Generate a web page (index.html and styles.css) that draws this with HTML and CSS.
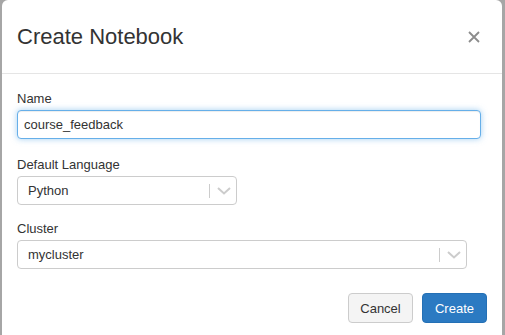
FILE: index.html
```html
<!DOCTYPE html>
<html>
<head>
<meta charset="utf-8">
<link rel="stylesheet" href="styles.css">
</head>
<body>
<div class="modal">
  <div class="modal-header">
    <h4 class="modal-title">Create Notebook</h4>
    <button class="close" aria-label="Close">
      <svg width="12" height="12" viewBox="0 0 12 12"><path d="M1 1L11 11M11 1L1 11" stroke="#8c8c8c" stroke-width="1.8" stroke-linecap="butt"/></svg>
    </button>
  </div>
  <div class="modal-body">
    <div class="field">
      <label class="label">Name</label>
      <input class="text-input" type="text" value="course_feedback">
    </div>
    <div class="field field-tight">
      <label class="label">Default Language</label>
      <div class="select select-lang">
        <span class="select-value">Python</span>
        <span class="select-indicators">
          <span class="select-sep"></span>
          <svg class="chevron" width="14" height="8" viewBox="0 0 14 8"><path d="M1 1L7 6.5L13 1" fill="none" stroke="#cccccc" stroke-width="2"/></svg>
        </span>
      </div>
    </div>
    <div class="field">
      <label class="label">Cluster</label>
      <div class="select select-cluster">
        <span class="select-value">mycluster</span>
        <span class="select-indicators">
          <span class="select-sep"></span>
          <svg class="chevron" width="14" height="8" viewBox="0 0 14 8"><path d="M1 1L7 6.5L13 1" fill="none" stroke="#cccccc" stroke-width="2"/></svg>
        </span>
      </div>
    </div>
  </div>
  <div class="modal-footer">
    <button class="btn btn-default">Cancel</button>
    <button class="btn btn-primary">Create</button>
  </div>
</div>
</body>
</html>
```

FILE: styles.css
```css
html, body {
  margin: 0;
  padding: 0;
}
body {
  background: #a6a6a6;
  font-family: "Liberation Sans", Arial, sans-serif;
  color: #333;
  height: 335px;
  overflow: hidden;
}
.modal {
  margin-left: 2px;
  width: 500px;
  min-height: 345px;
  background: #fff;
  border-radius: 6px 6px 0 0;
}
.modal-header {
  height: 74px;
  box-sizing: border-box;
  padding: 0 22px 0 15px;
  border-bottom: 1px solid #e5e5e5;
  display: flex;
  align-items: center;
  justify-content: space-between;
}
.modal-title {
  margin: 0;
  font-size: 22px;
  font-weight: normal;
  color: #333;
  line-height: 25px;
}
.close {
  border: 0;
  background: none;
  padding: 0;
  width: 12px;
  height: 12px;
  display: flex;
}
.modal-body {
  padding: 16px 15px 0 15px;
}
.field {
  display: flex;
  flex-direction: column;
  align-items: flex-start;
  margin-bottom: 17px;
}
.field-tight {
  margin-bottom: 15px;
}
.field:last-child {
  margin-bottom: 0;
}
.label {
  font-size: 13px;
  line-height: 18px;
  margin-bottom: 2px;
  color: #333;
}
.text-input {
  box-sizing: border-box;
  width: 464px;
  height: 29px;
  margin: 0;
  padding: 0 6px;
  border: 1px solid #66afe9;
  border-radius: 4px;
  font-family: "Liberation Sans", Arial, sans-serif;
  font-size: 13px;
  color: #333;
  outline: none;
  box-shadow: inset 0 1px 1px rgba(0,0,0,.075), 0 0 6px rgba(102,175,233,.6);
}
.select {
  box-sizing: border-box;
  height: 29px;
  border: 1px solid #ccc;
  border-radius: 4px;
  display: flex;
  align-items: center;
  justify-content: space-between;
  padding-left: 10px;
  font-size: 13px;
  color: #333;
}
.select-lang {
  width: 220px;
}
.select-cluster {
  width: 450px;
}
.select-indicators {
  display: flex;
  align-items: center;
}
.select-sep {
  width: 1px;
  height: 14px;
  background: #ccc;
  margin-right: 7px;
}
.chevron {
  margin-right: 5px;
  margin-top: 1px;
}
.modal-footer {
  display: flex;
  justify-content: flex-end;
  gap: 9px;
  padding: 24px 15px 0 15px;
}
.btn {
  box-sizing: border-box;
  width: 65px;
  height: 30px;
  border-radius: 4px;
  font-family: "Liberation Sans", Arial, sans-serif;
  font-size: 13px;
  padding: 0;
}
.btn-default {
  background: #f4f4f4;
  border: 1px solid #ccc;
  color: #333;
}
.btn-primary {
  background: #2b7ac2;
  border: 1px solid #2470b5;
  color: #fff;
}
```
